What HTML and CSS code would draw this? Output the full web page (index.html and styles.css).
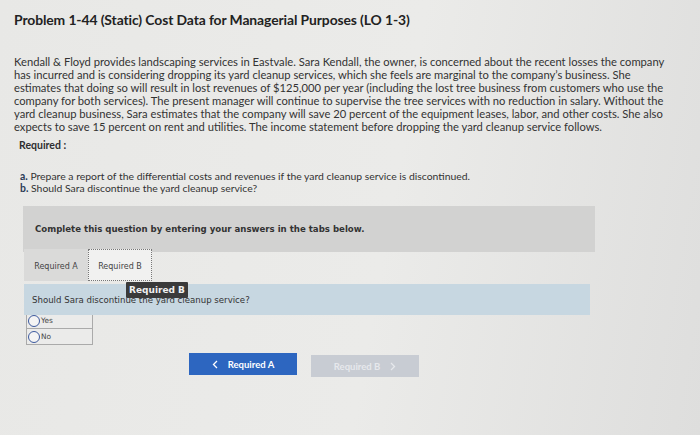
FILE: index.html
```html
<!DOCTYPE html>
<html>
<head>
<meta charset="utf-8">
<link rel="stylesheet" href="styles.css">
</head>
<body>
<div class="page">
  <h1 class="title">Problem 1-44 (Static) Cost Data for Managerial Purposes (LO 1-3)</h1>
  <p class="para">Kendall &amp; Floyd provides landscaping services in Eastvale. Sara Kendall, the owner, is concerned about the recent losses the company<br>has incurred and is considering dropping its yard cleanup services, which she feels are marginal to the company’s business. She<br>estimates that doing so will result in lost revenues of $125,000 per year (including the lost tree business from customers who use the<br>company for both services). The present manager will continue to supervise the tree services with no reduction in salary. Without the<br>yard cleanup business, Sara estimates that the company will save 20 percent of the equipment leases, labor, and other costs. She also<br>expects to save 15 percent on rent and utilities. The income statement before dropping the yard cleanup service follows.</p>
  <p class="req">Required :</p>
  <ul class="tasks">
    <li><b>a.</b> Prepare a report of the differential costs and revenues if the yard cleanup service is discontinued.</li>
    <li><b>b.</b> Should Sara discontinue the yard cleanup service?</li>
  </ul>
  <div class="instr">Complete this question by entering your answers in the tabs below.</div>
  <div class="tabs">
    <div class="tab">Required A</div>
    <div class="tab active">Required B</div>
  </div>
  <div class="question">
    Should Sara discontinue the yard cleanup service?
    <span class="tooltip">Required B</span>
  </div>
  <div class="choices">
    <label class="choice"><span class="radio"></span>Yes</label>
    <label class="choice"><span class="radio"></span>No</label>
  </div>
  <div class="nav">
    <div class="btn prev"><svg class="chev" width="6" height="9" viewBox="0 0 6 9"><path d="M5 1 L1.5 4.5 L5 8" fill="none" stroke="currentColor" stroke-width="1.3"/></svg>Required A</div>
    <div class="btn next">Required B<svg class="chev" width="6" height="9" viewBox="0 0 6 9"><path d="M1 1 L4.5 4.5 L1 8" fill="none" stroke="currentColor" stroke-width="1.3"/></svg></div>
  </div>
</div>
</body>
</html>
```
FILE: styles.css
```css
html, body {
  margin: 0;
  padding: 0;
}
body {
  width: 700px;
  height: 435px;
  overflow: hidden;
  background: linear-gradient(100deg, #e8e8e6 0%, #ebebe9 55%, #dededd 100%);
  font-family: Lato, "Open Sans", sans-serif;
  color: #2e2e30;
}
.page {
  padding: 11px 0 0 14px;
}
.title {
  margin: 0;
  font-size: 13.9px;
  font-weight: 700;
  color: #222;
  letter-spacing: -0.1px;
}
.para {
  margin: 27px 0 0 0;
  font-size: 11.2px;
  line-height: 13px;
  color: #333;
  white-space: nowrap;
}
.req {
  margin: 6px 0 0 5px;
  font-size: 10.5px;
  font-weight: 700;
}
.tasks {
  list-style: none;
  margin: 20px 0 0 6px;
  padding: 0;
  font-size: 10.4px;
  line-height: 11.5px;
  color: #333;
}
.tasks b { color: #2a3a55; }
.instr {
  margin: 12px 0 0 9px;
  width: 572px;
  height: 46px;
  padding-left: 12px;
  box-sizing: border-box;
  background: #d2d2d1;
  font-family: "DejaVu Sans", Verdana, sans-serif;
  font-size: 8.6px;
  font-weight: 700;
  color: #333;
  display: flex;
  align-items: center;
}
.tabs {
  display: flex;
  margin: -3px 0 0 10px;
  font-family: "DejaVu Sans", Verdana, sans-serif;
  font-size: 8px;
  color: #444;
}
.tab {
  width: 64px;
  height: 32px;
  display: flex;
  align-items: center;
  justify-content: center;
  background: #dadad9;
  box-sizing: border-box;
  padding-top: 2px;
}
.tab.active {
  background: #f1f1f0;
  border: 1px dotted #777;
}
.question {
  position: relative;
  margin: 3px 0 0 10px;
  width: 566px;
  height: 31px;
  box-sizing: border-box;
  padding-left: 8px;
  background: #c7d7e1;
  font-family: "DejaVu Sans", Verdana, sans-serif;
  font-size: 8.6px;
  color: #333;
  display: flex;
  align-items: center;
}
.tooltip {
  position: absolute;
  left: 102px;
  top: -2px;
  background: #3a3a3a;
  color: #f0f0f0;
  font-weight: 700;
  font-size: 9px;
  padding: 3px 3px 3px 3px;
  border-radius: 1px;
}
.choices {
  margin: -3px 0 0 12px;
  width: 67px;
  display: flex;
  flex-direction: column;
  font-family: "DejaVu Sans", Verdana, sans-serif;
  font-size: 7.4px;
  color: #444;
}
.choice {
  height: 15px;
  display: flex;
  align-items: center;
  border: 1px solid #aaa;
  background: #ebebea;
}
.choice + .choice { border-top: none; }
.radio {
  width: 10px;
  height: 10px;
  border: 1.2px solid #3d5a9e;
  border-radius: 50%;
  background: #f4f4f4;
  margin: 0 1px 0 1px;
}
.nav {
  display: flex;
  gap: 14px;
  margin: 8px 0 0 175px;
  align-items: flex-start;
}
.btn {
  width: 108px;
  height: 22px;
  display: flex;
  align-items: center;
  justify-content: center;
  font-size: 9.5px;
  font-weight: 700;
  box-sizing: border-box;
}
.prev {
  background: #2d66c0;
  color: #fff;
}
.next {
  margin-top: 2px;
  background: #c8ccd3;
  color: #e6e8ec;
}
.prev .chev { margin-right: 10px; }
.next .chev { margin-left: 10px; }
```
